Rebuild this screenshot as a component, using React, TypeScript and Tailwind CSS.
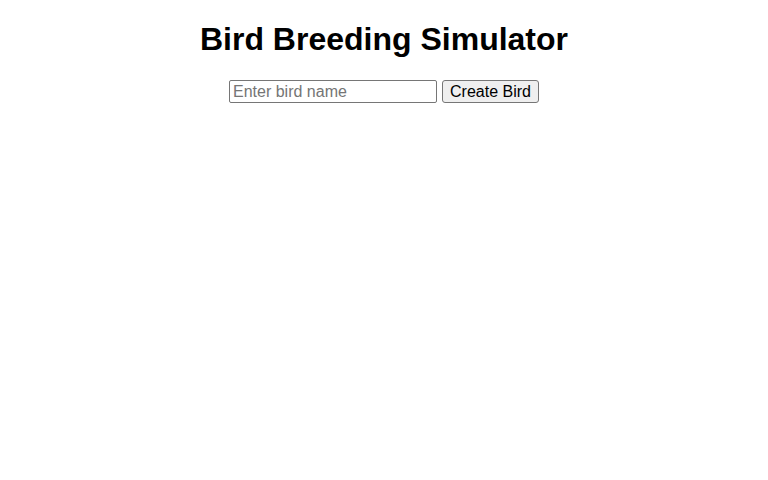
export default function App() {
  return (
    <div className="min-h-[480px] bg-white text-black text-center font-['Liberation_Sans',Arial,sans-serif]">
      <h1 className="pt-[21px] text-[32px] leading-[37px] font-bold">Bird Breeding Simulator</h1>
      <div className="mt-[22px] flex justify-center items-center gap-[5px]">
        <input
          type="text"
          placeholder="Enter bird name"
          className="w-[208px] h-[23px] border border-[#767676] rounded-[2px] px-[3px] text-base leading-none placeholder:text-[#757575] outline-none"
        />
        <button className="h-[23px] px-[7px] border border-[#767676] rounded-[3px] bg-[#efefef] text-base leading-none text-black">
          Create Bird
        </button>
      </div>
    </div>
  );
}
